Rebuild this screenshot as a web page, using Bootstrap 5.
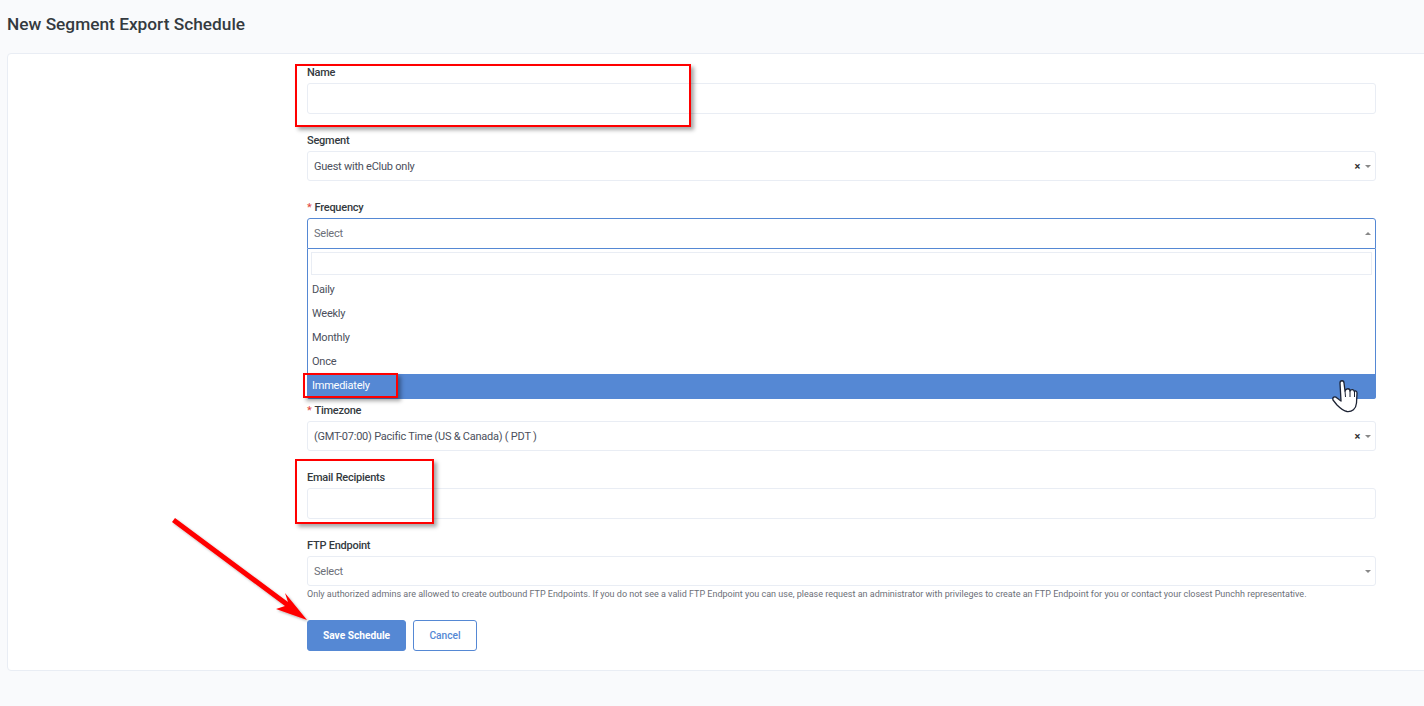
<!doctype html>
<html lang="en"><head><meta charset="utf-8"><title>New Segment Export Schedule</title>
<link href="https://cdn.jsdelivr.net/npm/bootstrap@5.3.0/dist/css/bootstrap.min.css" rel="stylesheet">
<style>
html,body{height:706px;overflow:hidden}
body{background:#f9fafc;font-family:Roboto,"Liberation Sans",sans-serif;font-size:11px;letter-spacing:-.24px;color:#4b4f5c;position:relative}
.page-title{font-size:17.3px;font-weight:500;letter-spacing:0;color:#343a40;line-height:20px;margin:0;padding:14px 0 0 7px;height:53px}
.form-panel{margin-left:7px;margin-right:-6px;height:618px;border:1px solid #e9edf4;border-radius:4px;background:#fff;padding:8px 0 0 299px}
.form-area{width:1069px}
.fld{margin-bottom:16px}
.fld-label{display:block;font-size:11px;font-weight:500;color:#343a40;line-height:22px;margin-bottom:-1px}
.req{color:#e0463c;margin-right:3px;font-weight:400}
.ctl{height:31px;border:1px solid #e9edf4;border-radius:3px;background:#fff;padding:0 4px 0 6px;display:flex;align-items:center;line-height:1;color:#4b4f5c}
.ctl.h30{height:30px}
.grow{flex:1 1 auto}
.clear-x{font-size:11px;font-weight:700;color:#333;margin-right:5px;line-height:1}
.caret-dn,.caret-up{width:0;height:0;border-left:3.5px solid transparent;border-right:3.5px solid transparent}
.caret-dn{border-top:3.5px solid #888}
.caret-up{border-bottom:3.5px solid #888}
.ph{color:#6c6f78}
.open-ctl{border-color:#5588d4;border-radius:3px 3px 0 0}
.open-menu{height:150px;border:1px solid #5588d4;border-top:0;border-radius:0 0 3px 3px;background:#fff;padding-top:3px;margin-bottom:-15px}
.menu-search{height:23px;margin:0 3px 3px;border:1px solid #e9edf4;background:#fff}
.menu-opt{height:24px;line-height:24px;padding-left:4px;color:#4b4f5c}
.menu-opt.on{background:#5588d4;color:#fff;height:25px;line-height:24px;margin:0 -1px -1px;padding-left:5px;border-radius:0 0 3px 3px}
.hint{font-size:9px;letter-spacing:0;color:#6c6f78;line-height:14px;padding-top:1px;white-space:nowrap}
.btn-row{display:flex;gap:7px;margin-top:19px}
.btn-save,.btn-cancel{height:31px;font-size:10.2px;letter-spacing:0;border-radius:3px;padding:0;display:flex;align-items:center;justify-content:center}
.btn-save{width:99px;background:#5588d4;border:1px solid #5588d4;color:#fff;font-weight:700}
.btn-cancel{width:64px;background:#fff;border:1px solid #5588d4;color:#5588d4;font-weight:500}
.mark-box{position:absolute;border:2px solid #f00;box-shadow:3px 3px 4px rgba(0,0,0,.35);pointer-events:none}
.mb-name{left:295px;top:64px;width:396px;height:63px}
.mb-opt{left:303px;top:373px;width:95px;height:25px}
.mb-mail{left:295px;top:459px;width:139px;height:65px}
.over-svg{position:absolute;left:0;top:0;pointer-events:none}
</style></head>
<body>
<h1 class="page-title">New Segment Export Schedule</h1>
<div class="form-panel">
 <form class="form-area">
  <div class="fld"><label class="fld-label">Name</label><div class="ctl"></div></div>
  <div class="fld"><label class="fld-label">Segment</label><div class="ctl h30"><span class="grow">Guest with eClub only</span><span class="clear-x">×</span><span class="caret-dn"></span></div></div>
  <div class="fld"><label class="fld-label"><span class="req">*</span>Frequency</label><div class="ctl open-ctl"><span class="grow ph">Select</span><span class="caret-up"></span></div>
   <div class="open-menu"><div class="menu-search"></div>
    <div class="menu-opt">Daily</div><div class="menu-opt">Weekly</div><div class="menu-opt">Monthly</div><div class="menu-opt">Once</div><div class="menu-opt on">Immediately</div></div></div>
  <div class="fld"><label class="fld-label"><span class="req">*</span>Timezone</label><div class="ctl h30"><span class="grow">(GMT-07:00) Pacific Time (US &amp; Canada) ( PDT )</span><span class="clear-x">×</span><span class="caret-dn"></span></div></div>
  <div class="fld"><label class="fld-label">Email Recipients</label><div class="ctl"></div></div>
  <div class="mb-0"><label class="fld-label">FTP Endpoint</label><div class="ctl h30"><span class="grow ph">Select</span><span class="caret-dn"></span></div>
   <div class="hint">Only authorized admins are allowed to create outbound FTP Endpoints. If you do not see a valid FTP Endpoint you can use, please request an administrator with privileges to create an FTP Endpoint for you or contact your closest Punchh representative.</div></div>
  <div class="btn-row"><button type="button" class="btn btn-save">Save Schedule</button><button type="button" class="btn btn-cancel">Cancel</button></div>
 </form>
</div>
<div class="mark-box mb-name"></div><div class="mark-box mb-opt"></div><div class="mark-box mb-mail"></div>
<svg class="over-svg" width="1424" height="706" viewBox="0 0 1424 706" aria-hidden="true">
 <defs><filter id="sh" x="-20%" y="-20%" width="140%" height="140%"><feDropShadow dx="1.5" dy="1.5" stdDeviation="1.2" flood-color="#000" flood-opacity=".3"/></filter></defs>
 <path filter="url(#sh)" d="M172 522 L175 518 L288 602 L285 593 L307 620 L276 609 L285 606 Z" fill="#f00"/>
 <path d="M1340 383 C1340 380 1344 380 1344 383 L1345 391 C1346 388 1350 388 1350 391 C1351 389 1354 389 1354.5 392 C1355 390 1357 391 1357 393 L1356.5 403 C1356 409 1352 412 1347 411.500 C1343 411 1340 408 1337 405 L1333 400 C1332 397 1335 396 1337 398 L1341 401 Z" fill="#fff" stroke="#1c2233" stroke-width="1.300" stroke-linejoin="round"/>
 <path d="M1345 391 L1345.500 397 M1350 391 L1350 397 M1354.500 392 L1354.500 397" stroke="#1c2233" stroke-width="1" fill="none"/>
</svg>
<script src="https://cdn.jsdelivr.net/npm/bootstrap@5.3.0/dist/js/bootstrap.bundle.min.js"></script>
</body></html>
